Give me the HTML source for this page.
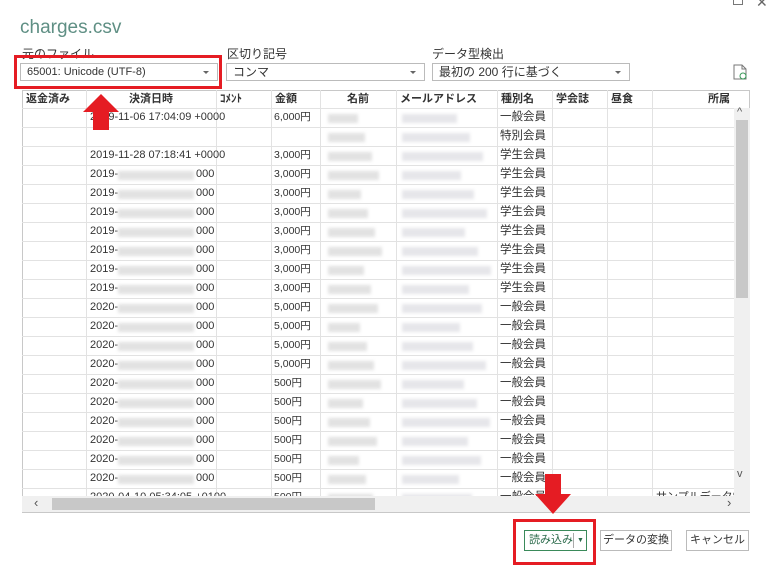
<!DOCTYPE html><html><head><meta charset="utf-8"><style>
body{margin:0;width:768px;height:574px;background:#fff;position:relative;overflow:hidden;font-family:"Liberation Sans","Noto Sans CJK JP",sans-serif;font-size:11px;color:#333}
.a{position:absolute}
.sel{position:absolute;height:18px;border:1px solid #bbb;background:#fff;box-sizing:border-box;padding:1px 6px;font-size:12px;line-height:15px}
.sel:after{content:"";position:absolute;right:8px;top:7px;border:3px solid transparent;border-top:3px solid #666}
.cell{position:absolute;height:19px;line-height:19px;white-space:nowrap;overflow:hidden}
.bl{position:absolute;background:#e2e2e2;filter:blur(1.5px);height:9px}
.btn{position:absolute;height:21px;border:1px solid #bbb;box-sizing:border-box;background:#fff;font-size:11px;line-height:19px;text-align:center}
</style></head><body>
<div class="a" style="left:733px;top:-6px;width:8px;height:9px;border:1px solid #777"></div>
<div class="a" style="left:756px;top:-6px;font-size:14px;color:#666">✕</div>
<div class="a" style="left:20px;top:17px;font-size:19px;color:#5f8f84">charges.csv</div>
<div class="a" style="left:22px;top:45px;font-size:12px">元のファイル</div>
<div class="a" style="left:227px;top:45px;font-size:12px">区切り記号</div>
<div class="a" style="left:432px;top:45px;font-size:12px">データ型検出</div>
<div class="sel" style="left:20px;top:63px;width:198px;font-size:11px">65001: Unicode (UTF-8)</div>
<div class="sel" style="left:226px;top:63px;width:199px">コンマ</div>
<div class="sel" style="left:432px;top:63px;width:198px">最初の 200 行に基づく</div>
<svg class="a" style="left:733px;top:64px" width="14" height="16"><path d="M1 1h8l4 4v10H1z M9 1v4h4" fill="none" stroke="#777"/><circle cx="10" cy="12" r="3" fill="none" stroke="#3a9a5a"/></svg>
<div class="a" style="left:14px;top:55px;width:202px;height:28px;border:3px solid #e51c23"></div>
<div class="a" style="left:22px;top:90px;width:728px;height:423px;border:1px solid #c8c8c8;box-sizing:border-box;overflow:hidden"></div>
<div id="g"></div>
<script>
var cols=[22,86,216,271,320,396,497,552,607,652,734];
var h=["返金済み","決済日時","ｺﾒﾝﾄ","金額","名前","メールアドレス","種別名","学会誌","昼食","所属"];
var s="";
for(var i=0;i<10;i++){var w=cols[i+1]-cols[i];var al=(i==1||i==4)?"center":(i==9?"right":"left");s+='<div class="cell" style="left:'+(cols[i]+4)+'px;top:90px;width:'+(w-8)+'px;text-align:'+al+';font-weight:bold;font-size:11px">'+h[i]+'</div>';
if(i>0)s+='<div class="a" style="left:'+cols[i]+'px;top:90px;width:1px;height:406px;background:#e2e2e2"></div>';}
for(var r=0;r<21;r++){var y=108+19*r;s+='<div class="a" style="left:22px;top:'+y+'px;width:712px;height:1px;background:#e2e2e2"></div>';
var d="",a="",t="一般会員";
if(r==0){d="2019-11-06 17:04:09 +0000";a="6,000円";}
else if(r==1){t="特別会員";}
else if(r<10){d=r==2?"2019-11-28 07:18:41 +0000":"2019-";a="3,000円";t="学生会員";}
else{d=r==20?"2020-04-10 05:34:05 +0100":"2020-";a=r<14?"5,000円":"500円";}
s+='<div class="cell" style="left:90px;top:'+y+'px;font-size:11px">'+d+'</div>';
if(r>2&&r<20)s+='<div class="cell" style="left:196px;top:'+y+'px;font-size:11px">000</div><div class="bl" style="left:118px;top:'+(y+6)+'px;width:76px"></div>';
s+='<div class="cell" style="left:274px;top:'+y+'px;font-size:10.5px">'+a+'</div>';
s+='<div class="cell" style="left:500px;top:'+y+'px;font-size:11.5px">'+t+'</div>';
s+='<div class="bl" style="left:328px;top:'+(y+6)+'px;width:'+(30+(r*7)%25)+'px"></div>';
s+='<div class="bl" style="left:402px;top:'+(y+6)+'px;width:'+(55+(r*13)%35)+'px;background:#e6e6ea"></div>';
if(r==20)s+='<div class="cell" style="left:656px;top:'+y+'px;font-size:11px">サンプルデータ学</div>';}
s+='<div class="a" style="left:22px;top:496px;width:728px;height:16px;background:#f0f0f0"></div>';
s+='<div class="a" style="left:52px;top:498px;width:323px;height:12px;background:#c8c8c8"></div>';
s+='<div class="a" style="left:34px;top:495px;font-size:13px;color:#555">‹</div><div class="a" style="left:727px;top:495px;font-size:13px;color:#555">›</div>';
s+='<div class="a" style="left:734px;top:108px;width:16px;height:388px;background:#f0f0f0"></div>';
s+='<div class="a" style="left:736px;top:120px;width:12px;height:178px;background:#c8c8c8"></div>';
s+='<div class="a" style="left:737px;top:106px;font-size:11px;color:#555">^</div><div class="a" style="left:737px;top:468px;font-size:11px;color:#555">v</div>';
document.getElementById("g").innerHTML=s;
</script>
<svg class="a" style="left:82px;top:92px" width="38" height="40"><path d="M19 2L37 20H27V38H11V20H1Z" fill="#e51c23"/></svg>
<svg class="a" style="left:534px;top:474px" width="38" height="42"><path d="M11 0H27V20H37L19 40L1 20H11Z" fill="#e51c23"/></svg>
<div class="btn" style="left:524px;top:530px;width:63px;border-color:#3a8a5a;color:#2a6a4a;text-align:left;padding-left:4px">読み込み<span style="position:absolute;left:48px;top:2px;height:15px;border-left:1px solid #aaa;padding-left:3px;font-size:7px;line-height:15px">▼</span></div>
<div class="btn" style="left:600px;top:530px;width:72px">データの変換</div>
<div class="btn" style="left:686px;top:530px;width:63px">キャンセル</div>
<div class="a" style="left:513px;top:519px;width:77px;height:40px;border:3px solid #e51c23"></div>
</body></html>
